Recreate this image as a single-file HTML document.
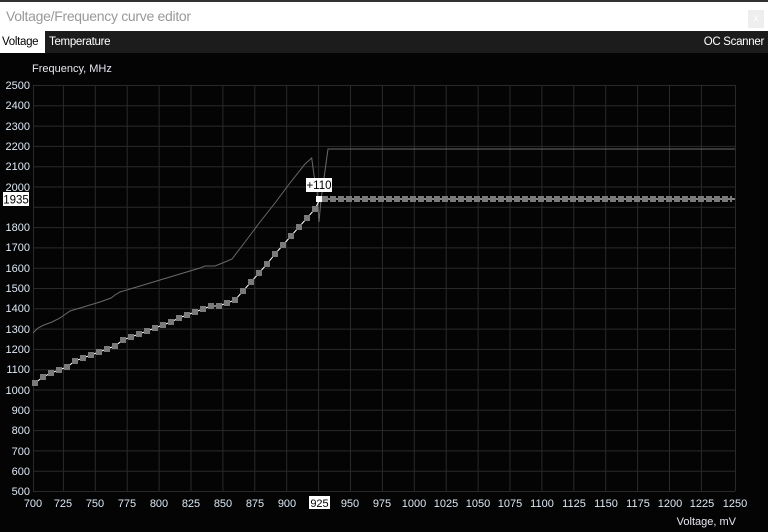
<!DOCTYPE html>
<html><head><meta charset="utf-8"><style>
html,body{margin:0;padding:0;width:768px;height:532px;overflow:hidden;background:#040404;font-family:"Liberation Sans",sans-serif;}
.title{position:absolute;left:0;top:0;width:768px;height:31px;background:#fff;border-top:2px solid #333;box-sizing:border-box;}
.title span{position:absolute;left:6px;top:6px;font-size:14px;color:#999;letter-spacing:-0.3px;}
.close{position:absolute;left:748px;top:8px;width:16px;height:18px;background:#eee;color:#fff;font-size:10px;text-align:center;line-height:18px;}
.tabs{position:absolute;left:0;top:31px;width:768px;height:22px;background:#1c1c1c;font-size:11.5px;color:#fff;}
.tabs div{position:absolute;top:0;height:22px;line-height:22px;}
</style></head><body>
<div class="title"><span>Voltage/Frequency curve editor</span><div class="close">x</div></div>
<div class="tabs">
<div style="left:0;width:45px;background:#fff;color:#000;padding-left:2px;box-sizing:border-box;letter-spacing:-0.3px;">Voltage</div>
<div style="left:49px;letter-spacing:-0.3px;">Temperature</div>
<div style="right:4px;letter-spacing:-0.3px;">OC Scanner</div>
</div>
<svg width="768" height="479" viewBox="0 53 768 479" style="position:absolute;left:0;top:53px" xmlns="http://www.w3.org/2000/svg" font-family="Liberation Sans, sans-serif" font-size="11">
<defs>
<pattern id="fd" x="2" y="196" width="8" height="6" patternUnits="userSpaceOnUse"><rect x="0" y="0" width="6" height="6" fill="#7a7a7a"/></pattern>
</defs>
<rect x="0" y="53" width="768" height="479" fill="#040404"/>
<text x="32" y="72" fill="#e6e6f0">Frequency, MHz</text>
<g stroke="#2a2a2a" stroke-width="1">
<line x1="33" y1="85.5" x2="735" y2="85.5"/><line x1="33" y1="105.8" x2="735" y2="105.8"/><line x1="33" y1="126.1" x2="735" y2="126.1"/><line x1="33" y1="146.4" x2="735" y2="146.4"/><line x1="33" y1="166.7" x2="735" y2="166.7"/><line x1="33" y1="187" x2="735" y2="187"/><line x1="33" y1="207.3" x2="735" y2="207.3"/><line x1="33" y1="227.6" x2="735" y2="227.6"/><line x1="33" y1="247.9" x2="735" y2="247.9"/><line x1="33" y1="268.2" x2="735" y2="268.2"/><line x1="33" y1="288.5" x2="735" y2="288.5"/><line x1="33" y1="308.8" x2="735" y2="308.8"/><line x1="33" y1="329.1" x2="735" y2="329.1"/><line x1="33" y1="349.4" x2="735" y2="349.4"/><line x1="33" y1="369.7" x2="735" y2="369.7"/><line x1="33" y1="390" x2="735" y2="390"/><line x1="33" y1="410.3" x2="735" y2="410.3"/><line x1="33" y1="430.6" x2="735" y2="430.6"/><line x1="33" y1="450.9" x2="735" y2="450.9"/><line x1="33" y1="471.2" x2="735" y2="471.2"/><line x1="33" y1="491.5" x2="735" y2="491.5"/>
<line x1="33.5" y1="85" x2="33.5" y2="491"/><line x1="63.4" y1="85" x2="63.4" y2="491"/><line x1="95.3" y1="85" x2="95.3" y2="491"/><line x1="127.2" y1="85" x2="127.2" y2="491"/><line x1="159.1" y1="85" x2="159.1" y2="491"/><line x1="191" y1="85" x2="191" y2="491"/><line x1="222.9" y1="85" x2="222.9" y2="491"/><line x1="254.8" y1="85" x2="254.8" y2="491"/><line x1="286.7" y1="85" x2="286.7" y2="491"/><line x1="318.6" y1="85" x2="318.6" y2="491"/><line x1="350.5" y1="85" x2="350.5" y2="491"/><line x1="382.4" y1="85" x2="382.4" y2="491"/><line x1="414.3" y1="85" x2="414.3" y2="491"/><line x1="446.2" y1="85" x2="446.2" y2="491"/><line x1="478.1" y1="85" x2="478.1" y2="491"/><line x1="510" y1="85" x2="510" y2="491"/><line x1="541.9" y1="85" x2="541.9" y2="491"/><line x1="573.8" y1="85" x2="573.8" y2="491"/><line x1="605.7" y1="85" x2="605.7" y2="491"/><line x1="637.6" y1="85" x2="637.6" y2="491"/><line x1="669.5" y1="85" x2="669.5" y2="491"/><line x1="701.4" y1="85" x2="701.4" y2="491"/><line x1="735.5" y1="85" x2="735.5" y2="491"/>
</g>
<g fill="#dde8f4" text-anchor="end">
<text x="30" y="89">2500</text><text x="30" y="109">2400</text><text x="30" y="130">2300</text><text x="30" y="150">2200</text><text x="30" y="170">2100</text><text x="30" y="191">2000</text><text x="30" y="231">1800</text><text x="30" y="251">1700</text><text x="30" y="272">1600</text><text x="30" y="292">1500</text><text x="30" y="312">1400</text><text x="30" y="333">1300</text><text x="30" y="353">1200</text><text x="30" y="373">1100</text><text x="30" y="394">1000</text><text x="30" y="414">900</text><text x="30" y="434">800</text><text x="30" y="455">700</text><text x="30" y="475">600</text><text x="30" y="495">500</text>
</g>
<g fill="#dde8f4" text-anchor="middle">
<text x="33" y="507">700</text><text x="63" y="507">725</text><text x="95" y="507">750</text><text x="127" y="507">775</text><text x="159" y="507">800</text><text x="191" y="507">825</text><text x="223" y="507">850</text><text x="255" y="507">875</text><text x="287" y="507">900</text><text x="350" y="507">950</text><text x="382" y="507">975</text><text x="414" y="507">1000</text><text x="446" y="507">1025</text><text x="478" y="507">1050</text><text x="510" y="507">1075</text><text x="542" y="507">1100</text><text x="574" y="507">1125</text><text x="606" y="507">1150</text><text x="638" y="507">1175</text><text x="670" y="507">1200</text><text x="702" y="507">1225</text><text x="735" y="507">1250</text>
</g>
<rect x="309" y="496" width="21" height="13" fill="#fff"/><text x="319.5" y="507" text-anchor="middle" fill="#000">925</text>
<text x="736" y="525" text-anchor="end" fill="#e6e6f0">Voltage, mV</text>
<polyline fill="none" stroke="#6a6a6a" stroke-width="1" points="33,333 38,328 44,325 52,322 60,318 70,311 80,308 90,305 100,302 111,298 115,295 120,292 130,289 140,286 150,283 160,280 170,277 180,274 190,271 200,268 205,266 215,266 225,262 232,259 245,242 260,222 275,203 290,183 305,164 311.7,158 314,175 317,190 319,222 321,200 324,178 328,149 735,149"/>
<polyline fill="none" stroke="#fff" stroke-width="1" points="35,383 43,377 51,373 59,370 67,367 75,361 83,358 91,355 99,352 107,349 115,346 123,340 131,337 139,334 147,331 155,328 163,325 171,322 179,318 187,315 195,312 203,309 211,306 219,306 227,303 235,300 243,291 251,282 259,273 267,264 275,254 283,245 291,236 299,227 307,218 315,209 320,199 735,199"/>
<g fill="#7a7a7a">
<rect x="32" y="380" width="6" height="6"/><rect x="40" y="374" width="6" height="6"/><rect x="48" y="370" width="6" height="6"/><rect x="56" y="367" width="6" height="6"/><rect x="64" y="364" width="6" height="6"/><rect x="72" y="358" width="6" height="6"/><rect x="80" y="355" width="6" height="6"/><rect x="88" y="352" width="6" height="6"/><rect x="96" y="349" width="6" height="6"/><rect x="104" y="346" width="6" height="6"/><rect x="112" y="343" width="6" height="6"/><rect x="120" y="337" width="6" height="6"/><rect x="128" y="334" width="6" height="6"/><rect x="136" y="331" width="6" height="6"/><rect x="144" y="328" width="6" height="6"/><rect x="152" y="325" width="6" height="6"/><rect x="160" y="322" width="6" height="6"/><rect x="168" y="319" width="6" height="6"/><rect x="176" y="315" width="6" height="6"/><rect x="184" y="312" width="6" height="6"/><rect x="192" y="309" width="6" height="6"/><rect x="200" y="306" width="6" height="6"/><rect x="208" y="303" width="6" height="6"/><rect x="216" y="303" width="6" height="6"/><rect x="224" y="300" width="6" height="6"/><rect x="232" y="297" width="6" height="6"/><rect x="240" y="288" width="6" height="6"/><rect x="248" y="279" width="6" height="6"/><rect x="256" y="270" width="6" height="6"/><rect x="264" y="261" width="6" height="6"/><rect x="272" y="251" width="6" height="6"/><rect x="280" y="242" width="6" height="6"/><rect x="288" y="233" width="6" height="6"/><rect x="296" y="224" width="6" height="6"/><rect x="304" y="215" width="6" height="6"/><rect x="312" y="206" width="6" height="6"/>
</g>
<rect x="322" y="196" width="410" height="6" fill="url(#fd)"/>
<rect x="316" y="196" width="6" height="6" fill="#fff"/>
<rect x="306" y="178" width="26" height="14" fill="#fff"/><text x="319" y="189" text-anchor="middle" fill="#000" font-size="11.5">+110</text>
<rect x="3" y="192" width="26" height="14" fill="#fff"/><text x="16" y="203.5" text-anchor="middle" fill="#000" font-size="11.5">1935</text>
</svg>
</body></html>
